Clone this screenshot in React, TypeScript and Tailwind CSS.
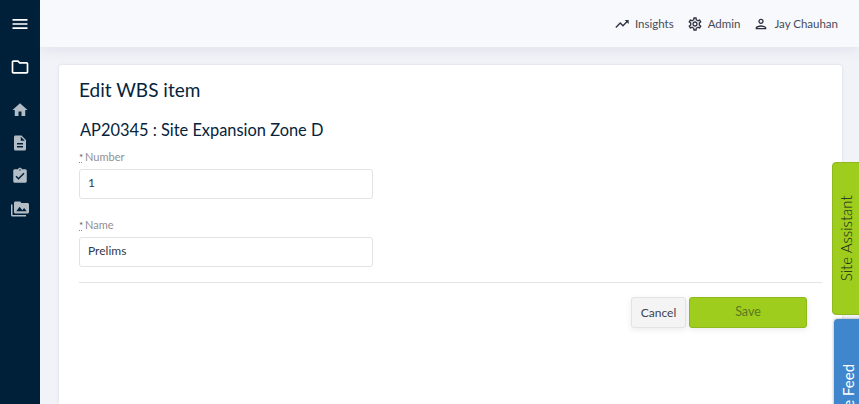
import { MdAssignmentTurnedIn, MdDescription, MdHome, MdMenu, MdOutlineFolder, MdOutlinePerson, MdOutlineSettings, MdPermMedia, MdTrendingUp } from 'react-icons/md'

const fieldClass =
  'mt-[3px] flex h-[30px] w-[294px] items-center rounded-[3px] border border-[#e2e3e6] bg-white px-2 pb-[2px] text-[12px] text-[#33394a]'

function Field({ label, value }: { label: string; value: string }) {
  return (
    <div>
      <div className="flex h-[17px] items-center text-[11px] text-[#8f8f93]">
        <span className="relative mr-[3px] w-[3px] text-[10px] text-[#555]">
          *
          {/* the two specks under the required mark */}
          <span className="absolute left-0 top-[12px] flex gap-px">
            <span className="size-px bg-[#8a8a8a]" />
            <span className="size-px bg-[#8a8a8a]" />
          </span>
        </span>
        {label}
      </div>
      <div className={fieldClass}>{value}</div>
    </div>
  )
}

function TopLink({ icon, label, className }: { icon: React.ReactNode; label: string; className: string }) {
  return (
    <div className={`flex items-center ${className}`}>
      {icon}
      <span className="text-[11.5px] text-[#454b58]">{label}</span>
    </div>
  )
}

export default function App() {
  return (
    <div className="relative flex h-[404px] w-[859px] overflow-hidden bg-[#f2f3f8] font-['Lato','Liberation_Sans',sans-serif]">
      <aside className="flex w-10 shrink-0 flex-col items-center bg-[#002039] text-white">
        <div className="flex h-[47px] items-center">
          <MdMenu size={20} />
        </div>
        <div className="flex h-10 items-center">
          <MdOutlineFolder size={20} />
        </div>
        <div className="mt-[14px] flex flex-col items-center gap-[15px] text-[#b3bdc6]">
          <MdHome size={18} />
          <MdDescription size={18} />
          <MdAssignmentTurnedIn size={18} />
          <MdPermMedia size={18} />
        </div>
      </aside>

      <div className="flex min-w-0 flex-1 flex-col">
        <header className="flex h-[47px] shrink-0 items-center justify-end bg-[#f8f9fc] pr-[21px] shadow-[0_2px_14px_rgba(60,70,110,0.1)]">
          <TopLink icon={<MdTrendingUp size={16} className="mr-[5px] text-[#2d3340]" />} label="Insights" className="mr-[13px]" />
          <TopLink icon={<MdOutlineSettings size={16} className="mr-[5px] text-[#2d3340]" />} label="Admin" className="mr-[13px]" />
          <TopLink icon={<MdOutlinePerson size={16} className="mr-[5px] text-[#2d3340]" />} label="Jay Chauhan" className="" />
        </header>

        <main className="ml-[19px] mr-[17px] mt-[18px] flex-1 rounded-t-[3px] bg-white px-[20px] pt-[12px] shadow-[0_0_3px_rgba(60,70,110,0.15)]">
          <h1 className="text-[19px] leading-[26px] text-[#06233c]">Edit WBS item</h1>
          <h2 className="mt-[16px] pl-px text-[16.4px] leading-[22px] text-[#06233c]">AP20345 : Site Expansion Zone D</h2>
          <div className="mt-[8px] flex flex-col gap-[18px]">
            <Field label="Number" value="1" />
            <Field label="Name" value="Prelims" />
          </div>
          <div className="mt-[15px] border-t border-[#e4e4e6]" />
          <div className="mr-[15px] mt-[14px] flex justify-end gap-[3px]">
            <button className="h-[31px] w-[55px] rounded-[3px] border border-[#e3e3e5] bg-[#f4f4f5] text-[12px] text-[#3d4350] shadow-[0_2px_6px_rgba(0,0,0,0.08)]">
              Cancel
            </button>
            <button className="h-[31px] w-[118px] rounded-[3px] border border-[#8fb81c] bg-[#9ecd1d] text-[12.5px] text-[#5c7a20] shadow-[0_2px_6px_rgba(0,0,0,0.08)]">
              Save
            </button>
          </div>
        </main>
      </div>

      <div className="absolute left-[832px] top-[162px] flex h-[153px] w-[30px] items-center justify-center rounded-l-[4px] border border-[#8fb81c] bg-[#9ecd1d] pr-[2px]">
        <span className="-rotate-90 whitespace-nowrap text-[15px] font-light text-[#14201c]">Site Assistant</span>
      </div>
      <div className="absolute left-[834px] top-[319px] flex h-[153px] w-[28px] items-center justify-center rounded-l-[4px] bg-[#3f86cd] shadow-[0_0_3px_rgba(0,0,0,0.4)]">
        <span className="-rotate-90 whitespace-nowrap text-[15px] text-white">Live Feed</span>
      </div>
    </div>
  )
}
